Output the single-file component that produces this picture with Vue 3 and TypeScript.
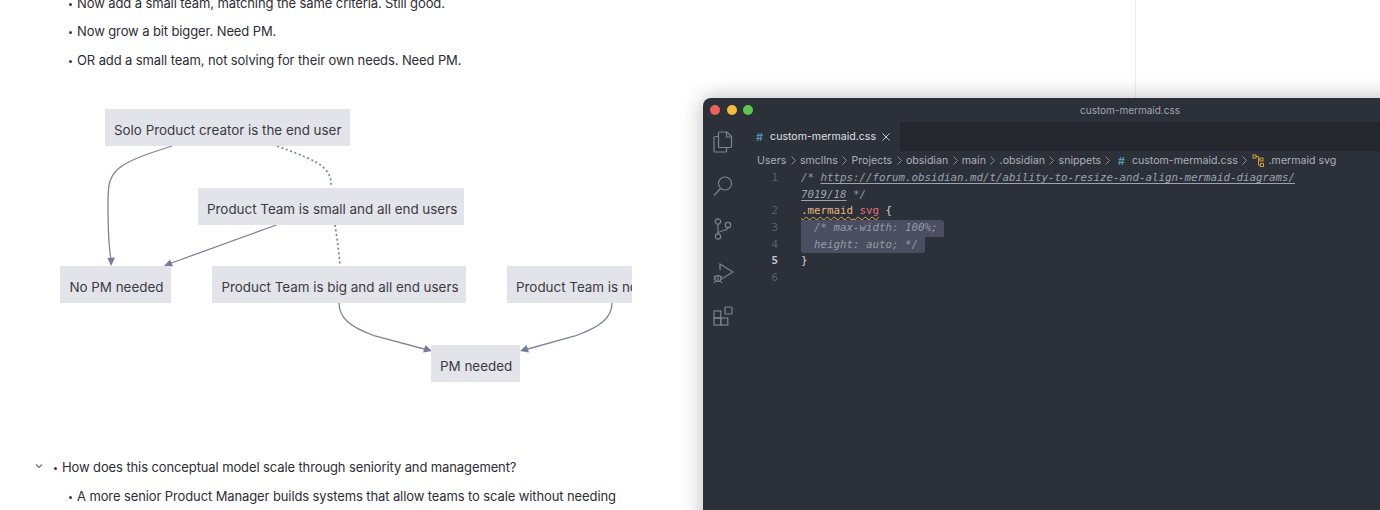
<script setup lang="ts">
interface DiagramNode {
  label: string
  x: number
  y: number
  w: number
}

// page coordinates, the canvas starts at y = 100
const nodes: DiagramNode[] = [
  { label: 'Solo Product creator is the end user', x: 105, y: 9, w: 245 },
  { label: 'Product Team is small and all end users', x: 198, y: 87.6, w: 266 },
  { label: 'No PM needed', x: 60.4, y: 166, w: 111 },
  { label: 'Product Team is big and all end users', x: 212.4, y: 166, w: 254 },
  { label: 'Product Team is not solving for their own needs', x: 507, y: 166, w: 330 },
  { label: 'PM needed', x: 431, y: 244.6, w: 89 },
]

const solid = [
  'M172 146 C150 153 128 160 118 169 C108 178 108 188 108 205 C108 228 109 248 111 260',
  'M279 224 L170 263.5',
  'M339 303 C339 318 350 327 375 336 L426 349.5',
  'M612 303 C612 318 600 327 575 336 L526 349.5',
]
const dotted = [
  'M277 146 C298 154 316 160 324 168 C331 175 331 180 331 187',
  'M335 225 C337 238 339 252 340 266',
]
const arrows = [
  '111,266 107.5,258 115,257.5',
  '164,266 170,259.5 173,266.5',
  '432,351 423,352.5 425.5,345',
  '520,351 529,352.5 526.5,345',
]

const breadcrumbs = ['Users', 'smcllns', 'Projects', 'obsidian', 'main', '.obsidian', 'snippets']
const lineNumbers = [1, 2, 3, 4, 5, 6]
const selectedFirst = '  /* max-width: 100%;'
const selectedLast = '  height: auto; */'
</script>

<template>
  <div class="page">
    <main class="note">
      <ul class="list top-list">
        <li class="nested">Now add a small team, matching the same criteria. Still good.</li>
        <li class="nested">Now grow a bit bigger. Need PM.</li>
        <li class="nested">OR add a small team, not solving for their own needs. Need PM.</li>
      </ul>

      <div class="diagram">
        <svg class="edges" width="632" height="290" viewBox="0 100 632 290" fill="none">
          <path v-for="d in solid" :key="d" :d="d" class="edge" />
          <path v-for="d in dotted" :key="d" :d="d" class="edge dotted" />
          <polygon v-for="p in arrows" :key="p" :points="p" class="arrow" />
        </svg>
        <div
          v-for="n in nodes"
          :key="n.label"
          class="node"
          :style="{ left: n.x + 'px', top: n.y + 'px', width: n.w + 'px' }"
        >{{ n.label }}</div>
      </div>

      <ul class="list bottom-list">
        <li class="outer">
          <svg class="fold" width="8" height="6" viewBox="0 0 8 6" fill="none">
            <path d="M1 1.5 L4 4.5 L7 1.5" stroke="#73757c" stroke-width="1.2" />
          </svg>
          How does this conceptual model scale through seniority and management?
        </li>
        <li class="nested">A more senior Product Manager builds systems that allow teams to scale without needing</li>
      </ul>
    </main>

    <section class="window">
      <header class="titlebar">
        <span class="light red"></span>
        <span class="light yellow"></span>
        <span class="light green"></span>
        <span class="title">custom-mermaid.css</span>
      </header>

      <div class="workbench">
        <nav class="activity">
          <svg width="20" height="22" viewBox="0 0 20 22" fill="none">
            <path d="M6.5 1H14L18.5 5.5V15.5C18.5 16 18 16.5 17.5 16.5H6.5C6 16.5 5.5 16 5.5 15.5V2C5.5 1.5 6 1 6.5 1Z" />
            <path d="M13.5 1V6H18.5" />
            <path d="M5.5 5.5H2C1.5 5.5 1 6 1 6.5V20C1 20.5 1.5 21 2 21H12.5C13 21 13.5 20.5 13.5 20V16.5" />
          </svg>
          <svg width="20" height="20" viewBox="0 0 20 20" fill="none">
            <circle cx="12" cy="7.5" r="6.5" />
            <path d="M7.5 12.5L1 19.5" />
          </svg>
          <svg width="18" height="22" viewBox="0 0 18 22" fill="none">
            <circle cx="4" cy="3.5" r="2.7" />
            <circle cx="4" cy="18.5" r="2.7" />
            <circle cx="14" cy="7" r="2.7" />
            <path d="M4 6.2V15.8" />
            <path d="M14 9.7C14 13 4.5 12 4 15.8" />
          </svg>
          <svg width="21" height="21" viewBox="0 0 21 21" fill="none">
            <path d="M7 7V1L20 9L9.5 15.5" />
            <circle cx="5" cy="15.5" r="3" />
            <path d="M5 12.5V18.5M1 13L2.5 14M9 13L7.5 14M0.5 16H2M9.5 16H8M1 20L2.5 18M9 20L7.5 18" />
          </svg>
          <svg width="20" height="20" viewBox="0 0 20 20" fill="none">
            <rect x="1" y="5" width="6.8" height="7" />
            <rect x="1" y="12" width="6.8" height="7" />
            <rect x="7.8" y="12" width="7" height="7" />
            <rect x="12" y="1" width="7" height="7" rx="1" />
          </svg>
        </nav>

        <div class="editor">
          <div class="tabs">
            <div class="tab">
              <span class="hash">#</span>
              <span class="tab-name">custom-mermaid.css</span>
              <svg class="close" width="8" height="8" viewBox="0 0 8 8" fill="none">
                <path d="M0.5 0.5L7.5 7.5M7.5 0.5L0.5 7.5" />
              </svg>
            </div>
            <div class="tabs-rest"></div>
          </div>

          <div class="breadcrumbs">
            <template v-for="b in breadcrumbs" :key="b">
              <span>{{ b }}</span>
              <svg class="crumb-sep" width="5" height="9" viewBox="0 0 5 9" fill="none">
                <path d="M0.5 0.5L4.5 4.5L0.5 8.5" />
              </svg>
            </template>
            <span class="hash crumb-hash">#</span>
            <span>custom-mermaid.css</span>
            <svg class="crumb-sep" width="5" height="9" viewBox="0 0 5 9" fill="none">
              <path d="M0.5 0.5L4.5 4.5L0.5 8.5" />
            </svg>
            <svg class="symbol" width="13" height="13" viewBox="0 0 13 13" fill="none">
              <rect x="1" y="1" width="3" height="3" />
              <rect x="8" y="4" width="3" height="3" />
              <rect x="8.5" y="9.5" width="3" height="3" />
              <path d="M4 2.5H6.5V11H8.5M6.5 5.5H8" />
            </svg>
            <span>.mermaid svg</span>
          </div>

          <div class="code">
            <div class="gutter">
              <span v-for="n in lineNumbers" :key="n" :class="['ln', { current: n === 5, wrapped: n === 2 }]">{{ n }}</span>
            </div>
            <div class="lines">
              <div class="line"><span class="comment">/* <span class="url">https://forum.obsidian.md/t/ability-to-resize-and-align-mermaid-diagrams/</span></span></div>
              <div class="line"><span class="comment"><span class="url">7019/18</span> */</span></div>
              <div class="line"><span class="squiggle"><span class="selector">.mermaid</span> <span class="tag">svg</span></span> <span class="brace">{</span></div>
              <div class="line"><span class="sel sel-first"><span class="comment">{{ selectedFirst }}</span></span></div>
              <div class="line"><span class="sel sel-last"><span class="comment">{{ selectedLast }}</span></span></div>
              <div class="line"><span class="brace">}</span></div>
              <div class="line"></div>
            </div>
          </div>
        </div>
      </div>
    </section>
  </div>
</template>

<style>
html,
body {
  margin: 0;
  background: #fff;
  overflow: hidden;
}
</style>

<style scoped>
.page {
  position: relative;
  width: 1380px;
  height: 510px;
  overflow: hidden;
  background: #fff;
  font-family: Inter, 'Noto Sans', sans-serif;
}

.note {
  width: 1135px;
  height: 510px;
  border-right: 1px solid #ececec;
  color: #2e2e33;
  font-size: 13px;
  letter-spacing: -0.11px;
}

.list {
  list-style: none;
  margin: 0;
  padding: 0;
}

.top-list {
  margin-top: -11.5px;
}

.list li {
  position: relative;
  height: 28.6px;
  line-height: 28.6px;
  white-space: nowrap;
}

.list li::before {
  content: '';
  position: absolute;
  top: 14px;
  width: 3px;
  height: 3px;
  border-radius: 50%;
  background: #3a3a40;
}

.nested {
  padding-left: 77px;
}

.nested::before {
  left: 69px;
}

.outer {
  padding-left: 62px;
}

.outer::before {
  left: 54px;
}

.fold {
  position: absolute;
  left: 35px;
  top: 10px;
}

.diagram {
  position: relative;
  width: 632px;
  height: 290px;
  margin-top: 25.7px;
  overflow: hidden;
}

.edges {
  display: block;
}

.edge {
  stroke: #7d839b;
  stroke-width: 1.3;
}

.dotted {
  stroke-width: 1.7;
  stroke-dasharray: 2 2.6;
}

.arrow {
  fill: #767c96;
}

.node {
  position: absolute;
  height: 37px;
  line-height: 42px;
  box-sizing: border-box;
  padding-left: 9px;
  background: #e3e4ea;
  color: #3a3a42;
  font-size: 13.4px;
  letter-spacing: 0;
  white-space: nowrap;
}

.bottom-list {
  margin-top: 63.5px;
}

.window {
  position: absolute;
  left: 703px;
  top: 98px;
  width: 720px;
  height: 460px;
  border-radius: 8px 0 0 0;
  background: #2c3039;
  color: #c4c7cf;
  box-shadow: 0 0 22px rgba(0, 0, 0, 0.28);
}

.titlebar {
  display: flex;
  align-items: center;
  position: relative;
  height: 24px;
  padding-left: 7px;
  gap: 6.5px;
}

.light {
  width: 10px;
  height: 10px;
  border-radius: 50%;
}

.red {
  background: #ee5f58;
}

.yellow {
  background: #f6bc3e;
}

.green {
  background: #5fc551;
}

.title {
  position: absolute;
  left: 377px;
  font-size: 10px;
  color: #a3a6ae;
}

.workbench {
  display: flex;
  height: 436px;
}

.activity {
  display: flex;
  flex-direction: column;
  align-items: center;
  flex: 0 0 44px;
  width: 44px;
  padding: 9px 4px 0 0;
  gap: 22.5px;
  box-sizing: border-box;
}

.activity svg {
  stroke: #7f828c;
  stroke-width: 1.2;
}

.editor {
  flex: 1;
  min-width: 0;
}

.tabs {
  display: flex;
  height: 29px;
}

.tab {
  display: flex;
  align-items: center;
  width: 153px;
  box-sizing: border-box;
  padding-left: 9px;
  font-size: 10.6px;
  color: #dfe1e6;
}

.tabs-rest {
  flex: 1;
  background: #24272e;
}

.hash {
  color: #519aba;
  font-size: 11px;
  font-weight: 600;
}

.tab-name {
  margin-left: 7px;
}

.close {
  margin-left: 6px;
  stroke: #c4c7cf;
  stroke-width: 1;
}

.breadcrumbs {
  display: flex;
  align-items: center;
  height: 19px;
  padding-left: 10px;
  font-size: 10.6px;
  color: #aeb1b9;
  white-space: nowrap;
}

.crumb-sep {
  margin: 0 4.35px;
  stroke: #8b8e97;
  stroke-width: 1;
}

.crumb-hash {
  margin: 0 7px 0 3px;
}

.symbol {
  margin-right: 4px;
  stroke: #d29a3c;
  stroke-width: 1;
}

.code {
  display: flex;
  font-family: 'DejaVu Sans Mono', 'Liberation Mono', monospace;
  font-size: 10.8px;
  line-height: 16.67px;
}

.gutter {
  display: flex;
  flex-direction: column;
  flex: 0 0 31px;
  text-align: right;
  color: #5b5f6b;
}

.ln.wrapped {
  margin-top: 16.67px;
}

.ln.current {
  color: #c4c7cf;
  font-weight: 700;
}

.lines {
  margin-left: 23px;
}

.line {
  height: 16.67px;
  white-space: pre;
}

.comment {
  color: #969aa6;
  font-style: italic;
}

.url {
  text-decoration: underline;
  text-underline-offset: 2px;
  color: #9ea2ad;
}

.selector {
  color: #e8b67c;
}

.tag {
  color: #e26d76;
}

.brace {
  color: #cfd2d9;
}

.squiggle {
  text-decoration: underline wavy #e5a84b 1px;
  text-underline-offset: 2px;
}

.sel {
  display: inline-block;
  height: 16.67px;
  padding-right: 6.5px;
  background: #4a4e60;
}

.sel-first {
  border-radius: 3px 3px 0 0;
}

.sel-last {
  border-radius: 0 0 3px 3px;
}
</style>
